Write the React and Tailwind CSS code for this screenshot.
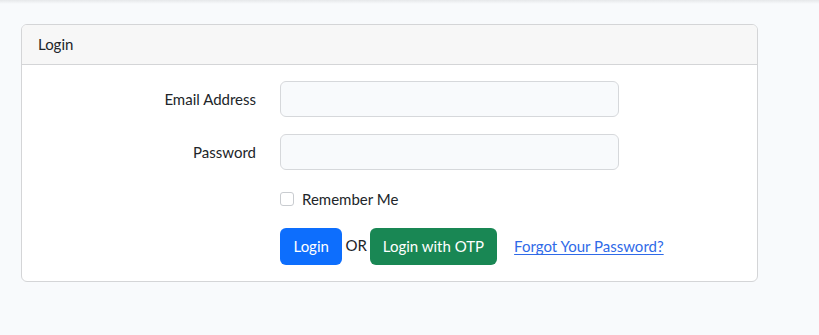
import React from "react";

export default function App() {
  return (
    <div
      className="min-h-[335px] bg-[#f8fafc] text-[#212529] text-[15px]"
      style={{ fontFamily: "Lato, 'Noto Sans', sans-serif" }}
    >
      {/* navbar shadow edge */}
      <div className="h-[4px] bg-gradient-to-b from-[#e6e8ea] to-[#f8fafc]" />

      <div className="pt-[20px] pl-[21px]">
        <div className="w-[737px] rounded-[6px] border border-[#d4d5d7] bg-white overflow-hidden">
          {/* Header */}
          <div className="h-[40px] flex items-center px-[16px] bg-[#f7f7f7] border-b border-[#d4d5d7]">
            Login
          </div>

          {/* Body */}
          <div className="px-[16px] pt-[16px] pb-[16px]">
            <div className="flex items-center mb-[17px]">
              <label className="w-[218px] text-right">Email Address</label>
              <input
                type="email"
                className="ml-[24px] w-[339px] h-[36px] rounded-[6px] border border-[#d6d8db] bg-[#f8fafc] px-3 outline-none"
              />
            </div>

            <div className="flex items-center mb-[17px]">
              <label className="w-[218px] text-right">Password</label>
              <input
                type="password"
                className="ml-[24px] w-[339px] h-[36px] rounded-[6px] border border-[#d6d8db] bg-[#f8fafc] px-3 outline-none"
              />
            </div>

            <div className="flex items-center ml-[242px] mb-[17px] h-[24px]">
              <span className="w-[14px] h-[14px] rounded-[3px] border border-[#c9ccd0] bg-white" />
              <span className="ml-[8px]">Remember Me</span>
            </div>

            <div className="flex items-center ml-[242px]">
              <button className="h-[37px] px-[13.5px] rounded-[6px] bg-[#0d6efd] text-white">
                Login
              </button>
              <span className="mx-[3px] -mt-[3px]">OR</span>
              <button className="h-[37px] px-[13px] rounded-[6px] bg-[#198754] text-white">
                Login with OTP
              </button>
              <a href="#" className="ml-[17px] text-[#2f6ae8] underline underline-offset-2">
                Forgot Your Password?
              </a>
            </div>
          </div>
        </div>
      </div>
    </div>
  );
}
